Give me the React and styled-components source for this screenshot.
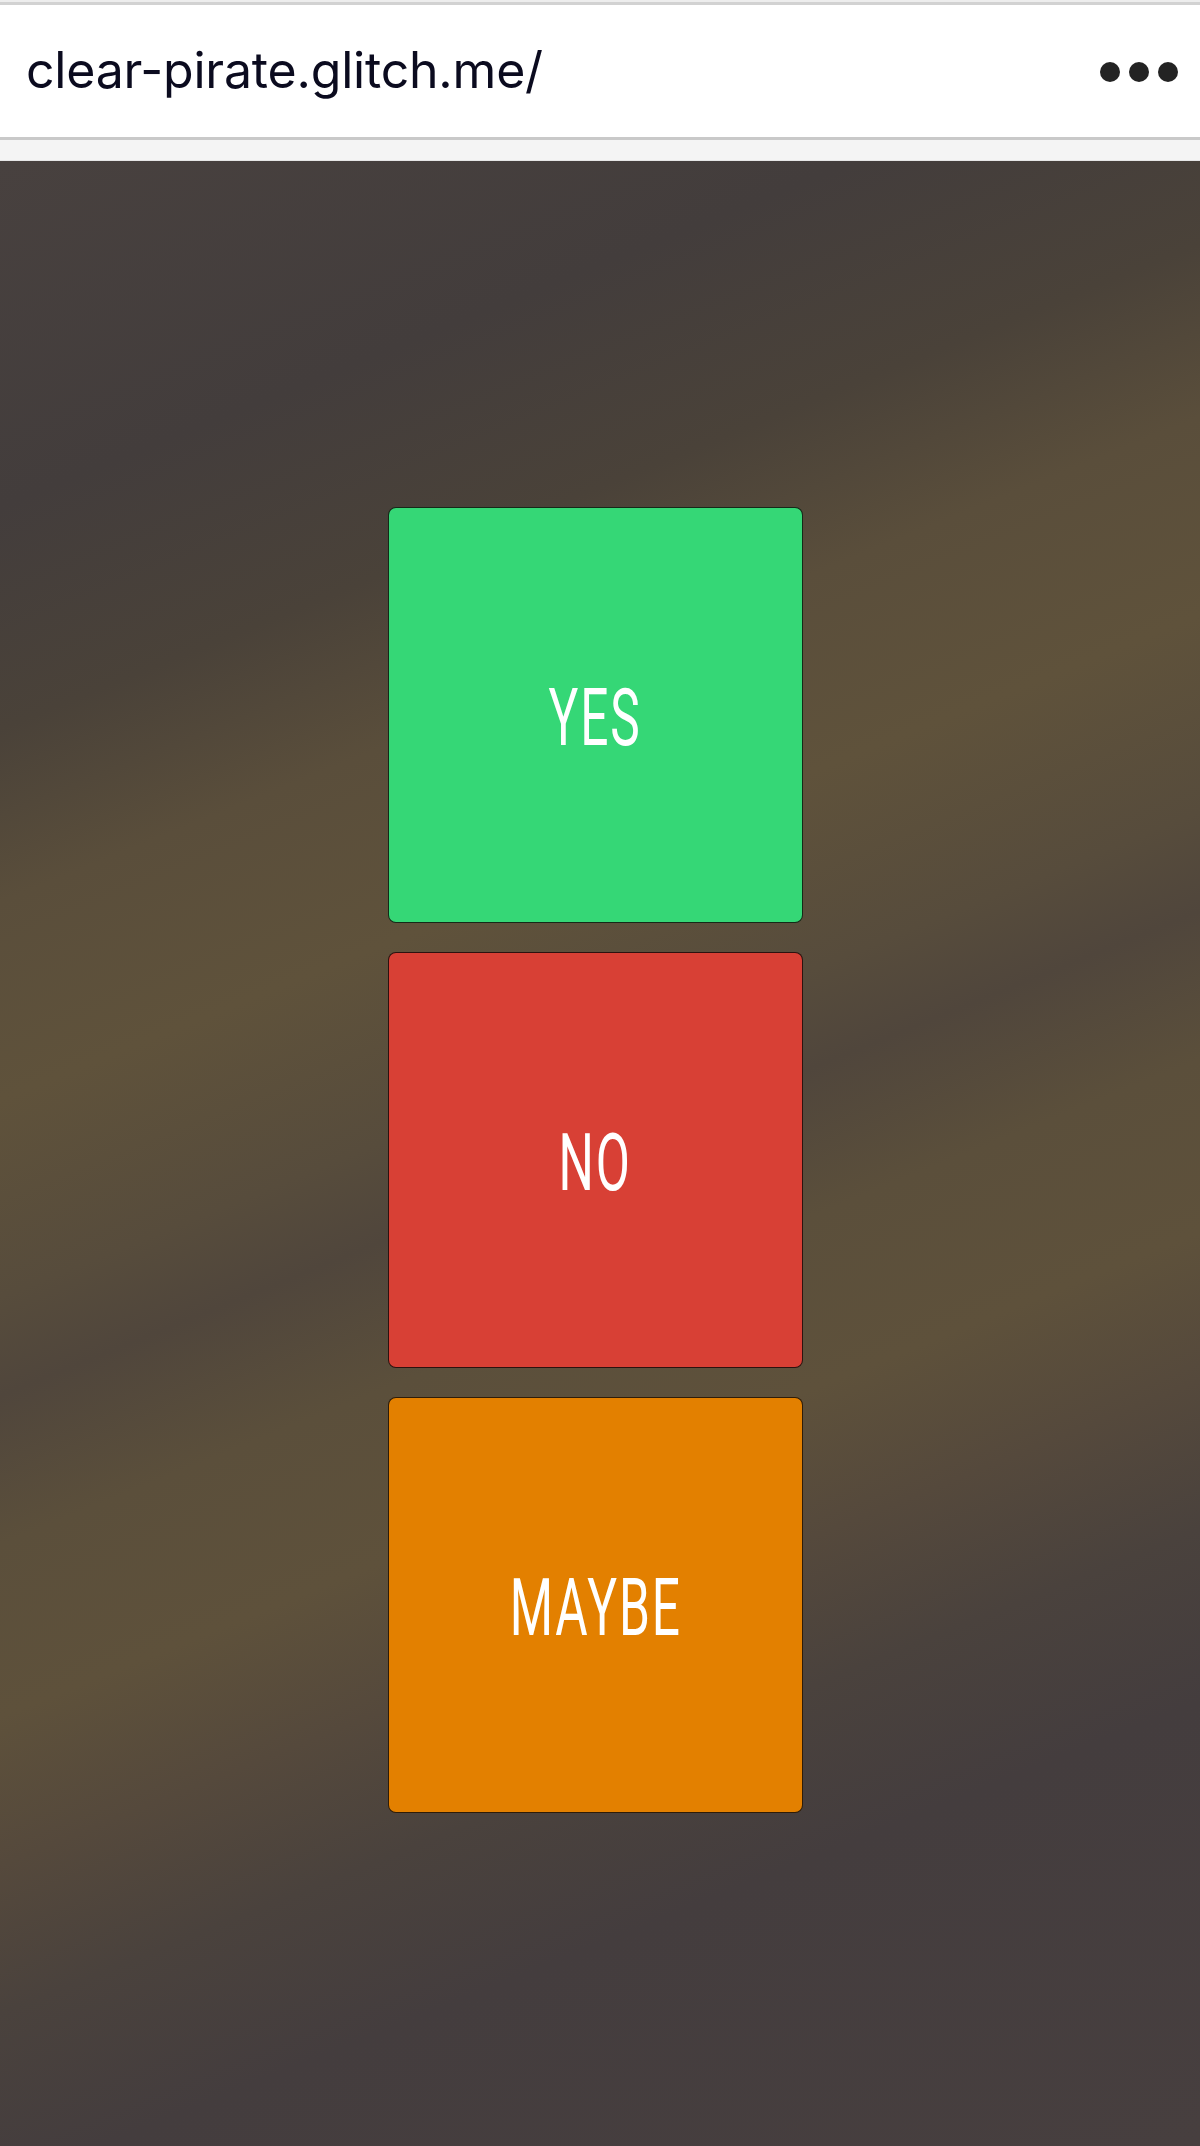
import React from "react";
import styled, { createGlobalStyle } from "styled-components";

const Global = createGlobalStyle`
  html, body { margin: 0; padding: 0; }
  body { width: 1200px; background: #463f3e; }
  * { box-sizing: border-box; }
`;

const Page = styled.div`
  width: 1200px;
  min-height: 2146px;
  display: flex;
  flex-direction: column;
`;

const Chrome = styled.header`
  display: flex;
  flex-direction: column;
  background: #f4f4f4;
`;

const TopEdge = styled.div`
  height: 5px;
  background: linear-gradient(#ededed 0 2px, #d2d2d2 2px 5px);
`;

const AddressBar = styled.div`
  height: 135px;
  background: #ffffff;
  display: flex;
  align-items: center;
  justify-content: space-between;
  padding: 0 22px 0 26px;
  border-bottom: 3px solid #c9c9c9;
`;

const Url = styled.span`
  font-family: Inter, "Liberation Sans", sans-serif;
  font-size: 50px;
  color: #0b0b1f;
  letter-spacing: -0.2px;
  margin-top: -2px;
`;

const Dots = styled.div`
  display: flex;
  gap: 9px;
  margin-top: 2px;
`;

const Dot = styled.span`
  width: 20px;
  height: 20px;
  border-radius: 50%;
  background: #232323;
`;

const Strip = styled.div`
  height: 21px;
  background: #f4f4f4;
  border-bottom: 1px solid #e6e6e6;
`;

const Stage = styled.main`
  flex: 1;
  display: flex;
  flex-direction: column;
  align-items: center;
  gap: 29px;
  padding: 346px 9px 0 0;
  background: linear-gradient(
    158deg,
    #48413f 0%,
    #433d3c 14%,
    #4a4239 23%,
    #5a4e3b 30%,
    #5f523b 38%,
    #574c3c 46%,
    #50463c 50%,
    #5b4f3b 56%,
    #5e513b 63%,
    #55493c 69%,
    #4a423d 75%,
    #443d3e 82%,
    #473f3f 100%
  );
`;

const Choice = styled.button`
  width: 415px;
  height: 416px;
  border: 1.5px solid rgba(15, 10, 8, 0.85);
  border-radius: 8px;
  background: ${(p) => p.$bg};
  display: flex;
  align-items: center;
  justify-content: center;
  padding: 0;
  cursor: pointer;
`;

const Label = styled.span`
  display: inline-block;
  font-family: Roboto, "Liberation Sans", sans-serif;
  font-weight: 400;
  font-size: 80px;
  line-height: 1;
  color: #ffffff;
  letter-spacing: 3px;
  transform: scaleX(0.62);
  margin-top: 6px;
`;

const choices = [
  { label: "YES", bg: "#35d776" },
  { label: "NO", bg: "#d84035" },
  { label: "MAYBE", bg: "#e38000" },
];

export default function App() {
  return (
    <>
      <Global />
      <Page>
        <Chrome>
          <TopEdge />
          <AddressBar>
            <Url>clear-pirate.glitch.me/</Url>
            <Dots>
              <Dot />
              <Dot />
              <Dot />
            </Dots>
          </AddressBar>
          <Strip />
        </Chrome>
        <Stage>
          {choices.map((c) => (
            <Choice key={c.label} $bg={c.bg}>
              <Label>{c.label}</Label>
            </Choice>
          ))}
        </Stage>
      </Page>
    </>
  );
}
